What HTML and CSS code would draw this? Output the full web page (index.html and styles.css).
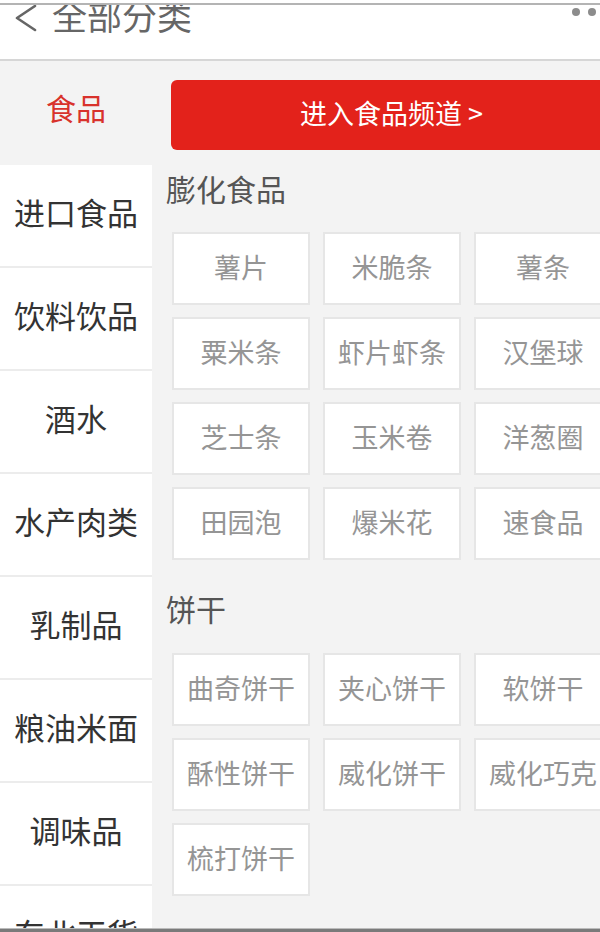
FILE: index.html
```html
<!DOCTYPE html>
<html lang="zh-CN">
<head>
<meta charset="utf-8">
<title>全部分类</title>
<link rel="stylesheet" href="styles.css">
</head>
<body>
<div class="app">
  <div class="topline"></div>
  <header class="header">
    <svg class="back" width="40" height="30" viewBox="0 0 40 30">
      <polyline points="35,1 17,13 35,25" fill="none" stroke="#666" stroke-width="2.6" stroke-linecap="round" stroke-linejoin="round"/>
    </svg>
    <h1 class="title">全部分类</h1>
    <div class="dots"><span></span><span></span><span></span></div>
  </header>
  <div class="content">
    <nav class="side">
      <div class="side-item active">食品</div>
      <div class="side-item">进口食品</div>
      <div class="side-item">饮料饮品</div>
      <div class="side-item">酒水</div>
      <div class="side-item">水产肉类</div>
      <div class="side-item">乳制品</div>
      <div class="side-item">粮油米面</div>
      <div class="side-item">调味品</div>
      <div class="side-item">东北干货</div>
    </nav>
    <main class="main">
      <a class="channel-btn">进入食品频道 &gt;</a>
      <h2 class="sec-title">膨化食品</h2>
      <div class="grid">
        <div class="card">薯片</div>
        <div class="card">米脆条</div>
        <div class="card">薯条</div>
        <div class="card">粟米条</div>
        <div class="card">虾片虾条</div>
        <div class="card">汉堡球</div>
        <div class="card">芝士条</div>
        <div class="card">玉米卷</div>
        <div class="card">洋葱圈</div>
        <div class="card">田园泡</div>
        <div class="card">爆米花</div>
        <div class="card">速食品</div>
      </div>
      <h2 class="sec-title sec-2">饼干</h2>
      <div class="grid">
        <div class="card">曲奇饼干</div>
        <div class="card">夹心饼干</div>
        <div class="card">软饼干</div>
        <div class="card">酥性饼干</div>
        <div class="card">威化饼干</div>
        <div class="card">威化巧克</div>
        <div class="card">梳打饼干</div>
      </div>
    </main>
  </div>
  <div class="bottomline"></div>
</div>
</body>
</html>
```

FILE: styles.css
```css
* { box-sizing: border-box; }
html, body {
  margin: 0;
  padding: 0;
  width: 600px;
  height: 932px;
  overflow: hidden;
  background: #f3f3f3;
}
body {
  font-family: "Noto Sans CJK SC", "Noto Sans", sans-serif;
}
.app {
  width: 620px;
  height: 932px;
  overflow: hidden;
  display: flex;
  flex-direction: column;
}
.topline {
  height: 5px;
  background: #fff;
  border-bottom: 2px solid #b4b4b4;
  flex: none;
}
.header {
  flex: none;
  height: 56px;
  background: #fff;
  border-bottom: 2px solid #d6d6d6;
  display: flex;
  align-items: flex-start;
  overflow: hidden;
  padding-right: 8px;
}
.back { flex: none; display: block; }
.title {
  margin: -7px 0 0 12px;
  font-size: 35px;
  line-height: 34px;
  font-weight: normal;
  color: #666;
}
.dots {
  margin-left: auto;
  margin-top: 3px;
  display: flex;
  gap: 8px;
}
.dots span {
  width: 8px;
  height: 8px;
  border-radius: 50%;
  background: #8c8c8c;
}
.content {
  flex: 1;
  display: flex;
  min-height: 0;
}
.side {
  width: 152px;
  flex: none;
}
.side-item {
  height: 103px;
  background: #fff;
  border-bottom: 2px solid #ececec;
  display: flex;
  align-items: center;
  justify-content: center;
  font-size: 31px;
  color: #333;
  padding-bottom: 8px;
}
.side-item.active {
  height: 104px;
  background: transparent;
  border-bottom: none;
  color: #d8322c;
  font-size: 30px;
  padding-bottom: 12px;
}
.main {
  padding: 19px 8px 0 20px;
}
.channel-btn {
  display: flex;
  align-items: center;
  justify-content: center;
  width: 441px;
  height: 70px;
  margin-left: -1px;
  padding-bottom: 5px;
  background: #e3221b;
  border-radius: 6px;
  color: #fff;
  font-size: 27px;
  font-weight: normal;
  text-decoration: none;
}
.sec-title {
  margin: 18px 0 24px -6px;
  font-size: 30px;
  line-height: 40px;
  font-weight: normal;
  color: #555;
}
.sec-2 { margin-top: 28px; margin-bottom: 25px; }
.grid {
  display: grid;
  grid-template-columns: repeat(3, 138px);
  column-gap: 13px;
  row-gap: 12px;
}
.card {
  height: 73px;
  background: #fff;
  border: 2px solid #e6e6e6;
  display: flex;
  align-items: center;
  justify-content: center;
  padding-bottom: 4px;
  font-size: 27px;
  color: #959595;
  white-space: nowrap;
  overflow: hidden;
}
.bottomline {
  position: fixed;
  left: 0;
  bottom: 0;
  width: 600px;
  height: 4px;
  background: #7a7a7a;
  border-top: 1px solid #bbb;
}
```
